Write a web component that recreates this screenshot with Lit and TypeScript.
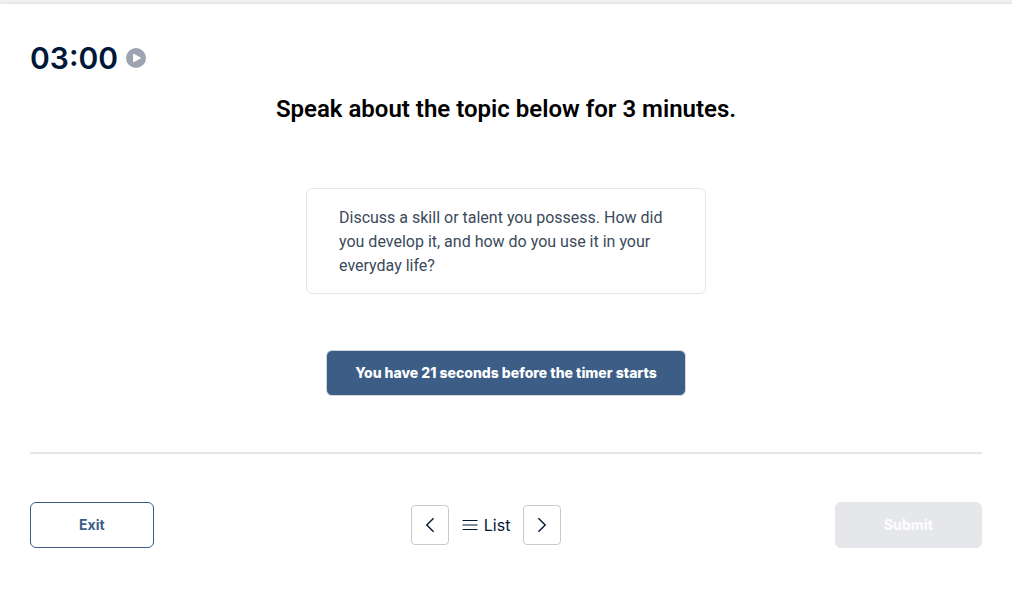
import { LitElement, html, css } from "lit";
import { customElement, property } from "lit/decorators.js";

@customElement("app-root")
class AppRoot extends LitElement {
  @property({ type: Number }) seconds = 21;

  static styles = css`
    :host {
      display: block;
      font-family: Inter, "Liberation Sans", sans-serif;
      color: #001837;
      background: #f2f2f2;
      padding-top: 4px;
    }
    * { box-sizing: border-box; }
    button { font: inherit; color: inherit; cursor: pointer; margin: 0; padding: 0; background: none; border: 0; }
    .page { padding: 36px 30px 44px; background: #fff; box-shadow: 0 0 4px rgba(0, 0, 0, 0.12); }
    .timer { display: flex; align-items: center; gap: 8px; font-size: 30px; line-height: 36px; font-weight: 600; }
    .play { display: flex; }
    h1 { margin: 14px 0 0; text-align: center; font-family: Roboto, sans-serif; font-size: 24px; line-height: 38px; font-weight: 600; color: #000; }
    .card { width: 400px; max-width: 100%; margin: 60px auto 0; padding: 17px 32px 15px; border: 1px solid #e5e7eb; border-radius: 6px; font-family: Roboto, sans-serif; font-size: 16px; line-height: 24px; color: #3b4a5a; }
    .card p { margin: 0; }
    .notice, .exit, .submit { padding: 12px 48px; border: 1px solid #e5e7eb; border-radius: 6px; font-size: 14px; line-height: 20px; font-weight: 800; }
    .notice { display: block; margin: 56px auto 0; padding: 12px 28px; border-color: #d1d5db; background: #3c5e86; color: #fff; }
    hr { margin: 56px 0 48px; border: 0; height: 2px; background: #e5e7eb; }
    footer { display: flex; justify-content: space-between; align-items: center; }
    .exit { border-color: #3c5e86; color: #3c5e86; font-weight: 700; }
    .submit { background: #e5e7eb; color: #fcfcfc; }
    nav { display: flex; align-items: center; gap: 13px; margin-right: 16px; }
    .step { width: 38px; height: 40px; border: 1px solid #cbcbcb; border-radius: 4px; display: grid; place-items: center; }
    .list { display: flex; align-items: center; gap: 6px; font-size: 16px; line-height: 24px; }
  `;

  render() {
    return html`
      <main class="page">
        <div class="timer">
          <span>03:00</span>
          <button class="play" aria-label="Start timer">
            <svg width="20" height="20" viewBox="0 0 20 20"><circle cx="10" cy="10" r="10" fill="#9ca3b1" /><path d="M7.6 6.2v7.6l7-3.8z" fill="#fff" stroke="#fff" stroke-width="1" stroke-linejoin="round" /></svg>
          </button>
        </div>
        <h1>Speak about the topic below for 3 minutes.</h1>
        <section class="card"><p>Discuss a skill or talent you possess. How did you develop it, and how do you use it in your everyday life?</p></section>
        <button class="notice">You have ${this.seconds} seconds before the timer starts</button>
        <hr />
        <footer>
          <button class="exit">Exit</button>
          <nav aria-label="Questions">
            <button class="step" aria-label="Previous"><svg width="20" height="20" viewBox="0 0 20 20" fill="none" stroke="currentColor" stroke-width="1.4"><path d="M13.6 3.3L6.8 10l6.8 6.7" /></svg></button>
            <button class="list"><svg width="16" height="20" viewBox="0 0 16 20" fill="none" stroke="currentColor" stroke-width="1.2"><path d="M.5 5.5h15M.5 10h15M.5 14.5h15" /></svg>List</button>
            <button class="step" aria-label="Next"><svg width="20" height="20" viewBox="0 0 20 20" fill="none" stroke="currentColor" stroke-width="1.4"><path d="M6.4 3.3l6.8 6.7-6.8 6.7" /></svg></button>
          </nav>
          <button class="submit" disabled>Submit</button>
        </footer>
      </main>
    `;
  }
}
